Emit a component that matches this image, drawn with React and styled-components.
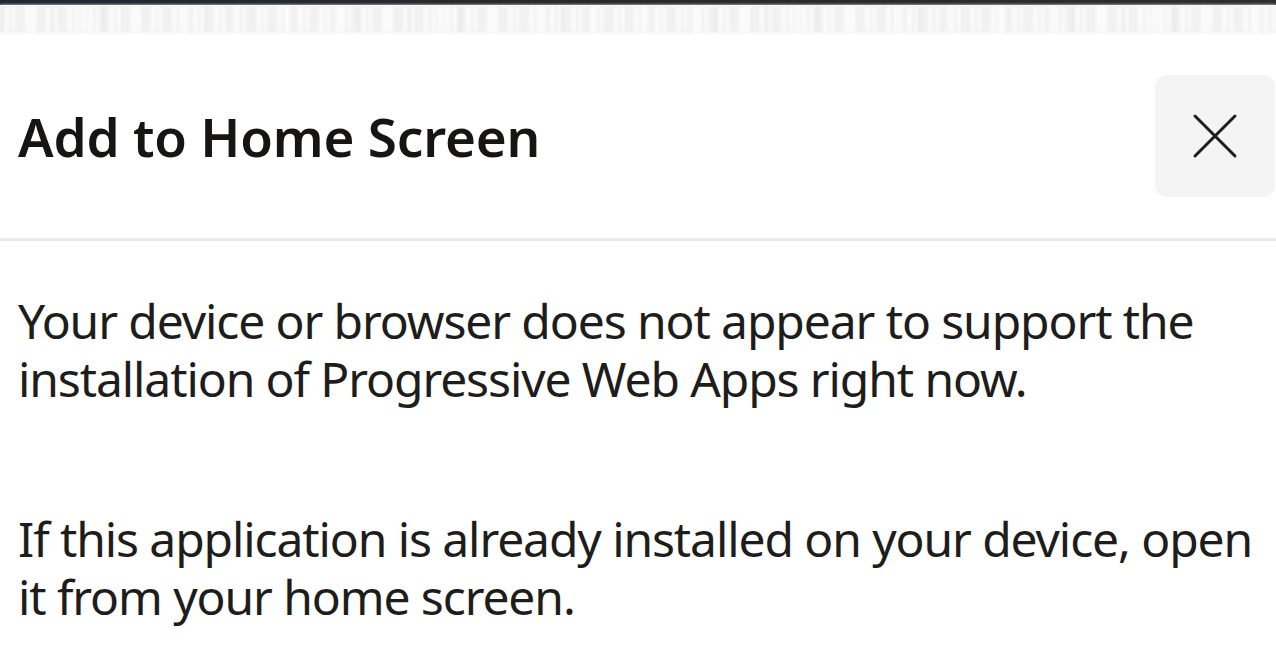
import React from "react";
import styled, { createGlobalStyle } from "styled-components";

const GlobalStyle = createGlobalStyle`
  html, body {
    margin: 0;
    padding: 0;
    background: #ffffff;
    font-family: "Noto Sans", "Open Sans", sans-serif;
    color: #161513;
  }
`;

const Page = styled.div`
  width: 1276px;
  height: 669px;
  overflow: hidden;
  display: flex;
  flex-direction: column;

  & > * {
    flex-shrink: 0;
  }
`;

const TopEdge = styled.div`
  height: 5px;
  background: linear-gradient(90deg, #1f2731 0%, #262a2c 50%, #2f2e2a 100%);
`;

// blurred ghost of the page behind the sheet
const GhostStrip = styled.div`
  height: 28px;
  background-color: #f1f1f1;
  background-image:
    repeating-linear-gradient(90deg, transparent 0 4px, #fbfbfb 4px 9px, transparent 9px 12px, #fdfdfd 12px 15px, transparent 15px 21px),
    repeating-linear-gradient(90deg, #e9e9e9 0 3px, transparent 3px 29px, #fafafa 29px 36px, transparent 36px 51px);
  background-size: 100% 24px, 100% 26px;
  background-position: 0 2px, 0 1px;
  background-repeat: repeat-x;
  filter: blur(1.8px);
`;

const Header = styled.div`
  display: flex;
  align-items: center;
  justify-content: space-between;
  padding: 42px 1px 41px 18px;
  border-bottom: 3px solid #e9e9e9;
`;

const Title = styled.h1`
  margin: 0;
  font-size: 53px;
  font-weight: 600;
  letter-spacing: -0.2px;
  color: #161513;
`;

const CloseButton = styled.button`
  width: 120px;
  height: 122px;
  border: none;
  border-radius: 12px;
  background: #f4f4f4;
  display: flex;
  align-items: center;
  justify-content: center;
  padding: 0;
  cursor: pointer;
`;

const Body = styled.div`
  padding: 51px 16px 0 18px;
`;

const Para = styled.p`
  margin: 0 0 102px 0;
  font-size: 48px;
  line-height: 58px;
  font-weight: 400;
  letter-spacing: -1.1px;
  color: #1e1d1b;
`;

export default function App() {
  return (
    <Page>
      <GlobalStyle />
      <TopEdge />
      <GhostStrip />
      <Header>
        <Title>Add to Home Screen</Title>
        <CloseButton aria-label="Close">
          <svg width="46" height="46" viewBox="0 0 46 46" fill="none">
            <path d="M3 3 L43 43 M43 3 L3 43" stroke="#1b1b1b" strokeWidth="3" strokeLinecap="round" />
          </svg>
        </CloseButton>
      </Header>
      <Body>
        <Para>
          Your device or browser does not appear to support the installation
          of Progressive Web Apps right now.
        </Para>
        <Para>
          If this application is already installed on your device, open it
          from your home screen.
        </Para>
      </Body>
    </Page>
  );
}
